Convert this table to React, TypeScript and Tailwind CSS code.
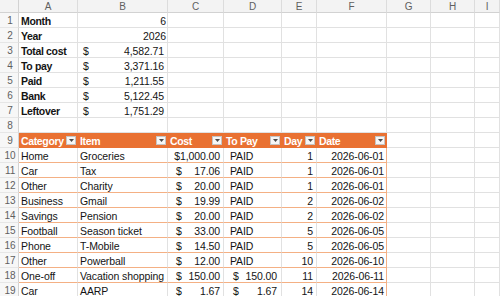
import React from "react";

const G = "border-[#e1e1e1]";

function Filter() {
  return (
    <span className="w-[10px] h-[9px] bg-[#f6f6f6] border border-[#c4c4c4] flex items-center justify-center shrink-0">
      <svg width="5" height="3" viewBox="0 0 5 3">
        <path d="M0 0H5L2.5 3Z" fill="#4a4a4a" />
      </svg>
    </span>
  );
}

function Money({ v, pl, pr }: { v: string; pl: string; pr: string }) {
  return (
    <div className={`flex justify-between ${pl} ${pr}`}>
      <span>$</span>
      <span>{v}</span>
    </div>
  );
}

const colLetters = ["A", "B", "C", "D", "E", "F", "G", "H", "I"];

const summary: [string, React.ReactNode][] = [
  ["Month", <div className="text-right pr-[1px]">6</div>],
  ["Year", <div className="text-right pr-[1px]">2026</div>],
  ["Total cost", <Money v="4,582.71" pl="pl-[5px]" pr="pr-[3px]" />],
  ["To pay", <Money v="3,371.16" pl="pl-[5px]" pr="pr-[3px]" />],
  ["Paid", <Money v="1,211.55" pl="pl-[5px]" pr="pr-[3px]" />],
  ["Bank", <Money v="5,122.45" pl="pl-[5px]" pr="pr-[3px]" />],
  ["Leftover", <Money v="1,751.29" pl="pl-[5px]" pr="pr-[3px]" />],
];

type Item = [string, string, string, string | null, number, string];
const items: Item[] = [
  ["Home", "Groceries", "1,000.00", null, 1, "2026-06-01"],
  ["Car", "Tax", "17.06", null, 1, "2026-06-01"],
  ["Other", "Charity", "20.00", null, 1, "2026-06-01"],
  ["Business", "Gmail", "19.99", null, 2, "2026-06-02"],
  ["Savings", "Pension", "20.00", null, 2, "2026-06-02"],
  ["Football", "Season ticket", "33.00", null, 5, "2026-06-05"],
  ["Phone", "T-Mobile", "14.50", null, 5, "2026-06-05"],
  ["Other", "Powerball", "12.00", null, 10, "2026-06-10"],
  ["One-off", "Vacation shopping", "150.00", "150.00", 11, "2026-06-11"],
  ["Car", "AARP", "1.67", "1.67", 14, "2026-06-14"],
];

const cell = "h-[15px] border-b border-r overflow-hidden whitespace-nowrap leading-[16px]";

function RowNum({ n }: { n: number }) {
  return (
    <div className="h-[15px] border-b border-r border-b-[#e6e6e6] border-r-[#d2d2d2] bg-[#f7f7f7] text-[10px] leading-[16px] text-[#5f5f5f] text-center pl-[2px]">
      {n}
    </div>
  );
}

function Empty({ n }: { n: number }) {
  return (
    <>
      {Array.from({ length: n }).map((_, i) => (
        <div key={i} className={`${cell} ${G}`} />
      ))}
    </>
  );
}

export default function App() {
  const header = ["Category", "Item", "Cost", "To Pay", "Day", "Date"];
  return (
    <div className="w-[500px] h-[296px] overflow-hidden bg-white font-[family-name:Liberation_Sans,Arial,sans-serif] text-[10.5px] tracking-[-0.1px] text-[#141414]">
      <div className="grid grid-cols-[19px_59px_90px_56px_58px_35px_70px_44px_44px_1fr]">
        {/* column header row */}
        <div className="h-[13px] border-b border-r border-[#d2d2d2] bg-[#f3f3f3]" />
        {colLetters.map((c) => (
          <div
            key={c}
            className="h-[13px] border-b border-r border-b-[#d2d2d2] border-r-[#dcdcdc] bg-[#f3f3f3] text-[10px] leading-[13px] text-[#5f5f5f] text-center"
          >
            {c}
          </div>
        ))}

        {/* summary rows */}
        {summary.map(([label, val], i) => (
          <React.Fragment key={label}>
            <RowNum n={i + 1} />
            <div className={`${cell} ${G} pl-[2px] font-bold tracking-[-0.35px]`}>{label}</div>
            <div className={`${cell} ${G}`}>{val}</div>
            <Empty n={7} />
          </React.Fragment>
        ))}

        {/* row 8 */}
        <RowNum n={8} />
        <Empty n={9} />

        {/* table header row 9 */}
        <RowNum n={9} />
        {header.map((h) => (
          <div
            key={h}
            className={`${cell} border-[#e97132] bg-[#e97132] text-white font-bold tracking-[-0.35px] flex items-center justify-between pl-[2px] pr-[1px]`}
          >
            <span className="leading-[16px] mt-[1px]">{h}</span>
            <Filter />
          </div>
        ))}
        <Empty n={3} />

        {/* table data rows */}
        {items.map(([cat, item, cost, topay, day, date], i) => {
          const tc = `${cell} border-b-[#f4b084] border-r-[#e1e1e1]`;
          return (
            <React.Fragment key={i}>
              <RowNum n={10 + i} />
              <div className={`${tc} pl-[2px]`}>{cat}</div>
              <div className={`${tc} pl-[2px]`}>{item}</div>
              <div className={tc}>
                {cost === "1,000.00" ? (
                  <div className="text-right pr-[3px]">$1,000.00</div>
                ) : (
                  <Money v={cost} pl="pl-[8px]" pr="pr-[3px]" />
                )}
              </div>
              <div className={tc}>
                {topay ? (
                  <Money v={topay} pl="pl-[9px]" pr="pr-[4px]" />
                ) : (
                  <div className="pl-[6px]">PAID</div>
                )}
              </div>
              <div className={`${tc} text-right pr-[3px]`}>{day}</div>
              <div className={`${cell} border-b-[#f4b084] border-r-[#f4b084] text-right pr-[2px]`}>{date}</div>
              <Empty n={3} />
            </React.Fragment>
          );
        })}
      </div>
    </div>
  );
}
